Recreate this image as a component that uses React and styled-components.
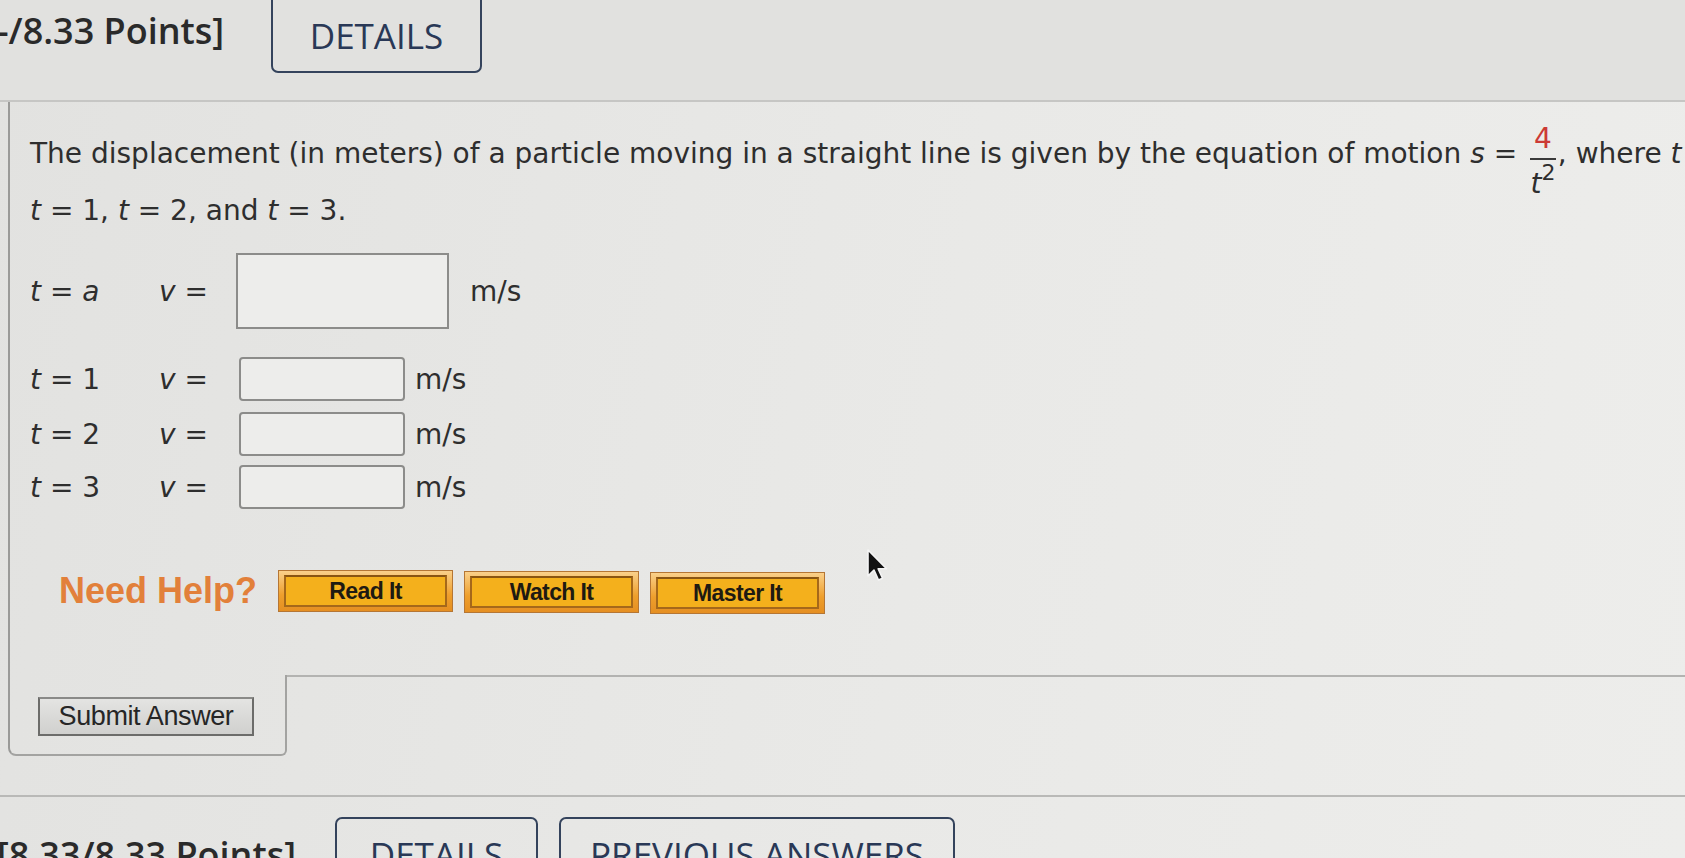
import React from 'react';
import styled, { createGlobalStyle } from 'styled-components';

const Global = createGlobalStyle`
  html, body {
    margin: 0;
    padding: 0;
  }
  body {
    width: 1685px;
    height: 858px;
    overflow: hidden;
    background: linear-gradient(100deg, #e2e2e0 0%, #e9e9e7 55%, #ededeb 100%);
    font-family: "DejaVu Sans", Verdana, sans-serif;
    color: #2e2e2e;
    position: relative;
  }
`;

const TopBar = styled.header`
  display: flex;
  align-items: flex-start;
  height: ${p => p.h}px;
  overflow: hidden;
  background: ${p => p.bg || 'transparent'};
  border-bottom: ${p => (p.line ? '2px solid #c6c6c4' : 'none')};
  padding-top: ${p => p.pt || 0}px;
`;

const Points = styled.div`
  box-sizing: border-box;
  width: ${p => p.w}px;
  font-family: "Open Sans", sans-serif;
  font-weight: 600;
  font-size: 36px;
  color: #2a2a2a;
  margin-left: -3px;
  padding-top: ${p => p.pt}px;
  white-space: nowrap;
`;

const Tab = styled.div`
  box-sizing: border-box;
  width: ${p => p.w}px;
  height: ${p => (p.up ? 82 : 92)}px;
  margin-top: ${p => (p.up ? -9 : 0)}px;
  margin-left: ${p => p.ml || 0}px;
  border: 2.5px solid #34435c;
  border-radius: ${p => (p.up ? '0 0 7px 7px' : '7px 7px 0 0')};
  display: flex;
  align-items: ${p => (p.up ? 'center' : 'flex-start')};
  justify-content: center;
  padding-top: ${p => (p.up ? 6 : 12)}px;
  font-family: "Open Sans", sans-serif;
  font-weight: 500;
  font-size: 35px;
  color: #293856;
  white-space: nowrap;
`;

const Panel = styled.section`
  margin-left: 8px;
`;

const Body = styled.div`
  border-left: 2px solid #9a9a98;
  padding: 17px 0 61px 20px;
`;

const Prompt = styled.div`
  font-size: 28px;
  white-space: nowrap;
  height: ${p => p.lh}px;
  line-height: ${p => p.lh}px;
`;

const Var = styled.i`
  font-style: italic;
`;

const Frac = styled.span`
  display: inline-flex;
  flex-direction: column;
  align-items: center;
  vertical-align: middle;
  position: relative;
  top: 6px;
  line-height: 30px;
  margin: -40px 2px -40px 4px;
`;

const Num = styled.span`
  color: #cc3a34;
  padding: 0 4px;
`;

const Bar = styled.span`
  align-self: stretch;
  height: 2px;
  background: #3a3a3a;
  margin: 4px 0 9px;
`;

const Sup = styled.sup`
  font-size: 22px;
  vertical-align: 13px;
  line-height: 0;
  font-style: normal;
`;

const Row = styled.div`
  display: grid;
  grid-template-columns: 129px 77px auto auto;
  justify-content: start;
  align-items: center;
  height: ${p => p.h}px;
  margin-top: ${p => p.mt}px;
  font-size: 28px;
`;

const Answer = styled.div`
  box-sizing: border-box;
  width: ${p => p.w}px;
  height: ${p => p.h}px;
  margin-left: ${p => p.ml}px;
  border: 2px solid #8c8c8a;
  border-radius: ${p => p.r}px;
  background: #ededeb;
`;

const Unit = styled.span`
  margin-left: ${p => p.ml}px;
`;

const HelpRow = styled.div`
  display: flex;
  align-items: center;
  gap: 11px;
  margin-top: 58px;
  height: 46px;
`;

const NeedHelp = styled.span`
  font-family: "Liberation Sans", Arial, sans-serif;
  font-weight: bold;
  font-size: 36px;
  color: #e2803a;
  margin-left: 29px;
  margin-right: 10px;
`;

const HelpButton = styled.button`
  box-sizing: border-box;
  width: 175px;
  height: 42px;
  padding: 4px 5px;
  margin-top: ${p => p.dy}px;
  border: 1px solid #b57634;
  background: linear-gradient(#fad08a, #ee9f2c 60%, #e58f22);
  cursor: pointer;
`;

const ButtonFace = styled.span`
  display: flex;
  align-items: center;
  justify-content: center;
  height: 100%;
  box-sizing: border-box;
  background: #f4b01c;
  border: 2px solid #a5681a;
  border-top-color: #8a5512;
  font-family: "Liberation Sans", Arial, sans-serif;
  font-weight: bold;
  font-size: 23px;
  letter-spacing: -0.6px;
  color: #1e1a12;
`;

const Footer = styled.div`
  display: flex;
  align-items: flex-start;
`;

const SubmitCell = styled.div`
  box-sizing: border-box;
  width: 279px;
  height: 81px;
  border: 2px solid #a3a3a1;
  border-top: none;
  border-left-color: #9a9a98;
  border-radius: 0 0 6px 8px;
  padding: 22px 0 0 28px;
`;

const Rest = styled.div`
  flex: 1;
  border-top: 2px solid #b3b3b1;
`;

const SubmitButton = styled.button`
  width: 216px;
  height: 39px;
  border: 2px solid #6c6c6a;
  border-top-color: #8a8a88;
  background: linear-gradient(#e4e4e2, #d0d0ce);
  font-family: "Liberation Sans", Arial, sans-serif;
  font-size: 27px;
  letter-spacing: -0.4px;
  color: #262626;
  padding: 0;
  cursor: pointer;
`;

const Divider = styled.hr`
  margin: 39px 0 0;
  border: none;
  border-top: 2px solid #b9b9b7;
`;

const Cursor = styled.svg`
  position: absolute;
  left: 866px;
  top: 548px;
`;

const rows = [
  { t: '1', mt: 27 },
  { t: '2', mt: 9 },
  { t: '3', mt: 7 },
];

const helps = [
  { label: 'Read It', dy: 0 },
  { label: 'Watch It', dy: 2 },
  { label: 'Master It', dy: 4 },
];

export default function App() {
  return (
    <>
      <Global />
      <TopBar h={100} line bg="#e1e1df">
        <Points w={274} pt={6}>-/8.33 Points]</Points>
        <Tab w={211} up>DETAILS</Tab>
      </TopBar>

      <Panel>
        <Body>
          <Prompt lh={70}>
            The displacement (in meters) of a particle moving in a straight line is given by the equation of motion{' '}
            <Var>s</Var> ={' '}
            <Frac>
              <Num>4</Num>
              <Bar />
              <span>
                <Var>t</Var>
                <Sup>2</Sup>
              </span>
            </Frac>
            , where <Var>t</Var>
          </Prompt>
          <Prompt lh={44}>
            <Var>t</Var> = 1, <Var>t</Var> = 2, and <Var>t</Var> = 3.
          </Prompt>

          <Row h={76} mt={20}>
            <span>
              <Var>t</Var> = <Var>a</Var>
            </span>
            <span>
              <Var>v</Var> =
            </span>
            <Answer w={213} h={76} ml={0} r={0} />
            <Unit ml={21}>m/s</Unit>
          </Row>

          {rows.map(r => (
            <Row key={r.t} h={46} mt={r.mt}>
              <span>
                <Var>t</Var> = {r.t}
              </span>
              <span>
                <Var>v</Var> =
              </span>
              <Answer w={166} h={44} ml={3} r={4} />
              <Unit ml={10}>m/s</Unit>
            </Row>
          ))}

          <HelpRow>
            <NeedHelp>Need Help?</NeedHelp>
            {helps.map(h => (
              <HelpButton key={h.label} dy={h.dy}>
                <ButtonFace>{h.label}</ButtonFace>
              </HelpButton>
            ))}
          </HelpRow>
        </Body>

        <Footer>
          <SubmitCell>
            <SubmitButton>Submit Answer</SubmitButton>
          </SubmitCell>
          <Rest />
        </Footer>
      </Panel>

      <Divider />

      <TopBar h={41} pt={20}>
        <Points w={338} pt={13}>[8.33/8.33 Points]</Points>
        <Tab w={203}>DETAILS</Tab>
        <Tab w={396} ml={21}>PREVIOUS ANSWERS</Tab>
      </TopBar>

      <Cursor width="24" height="36" viewBox="0 0 24 36">
        <path
          d="M2 2 L2 28 L8 22 L12.5 32 L16.5 30.2 L12.2 20.8 L20.5 20.8 Z"
          fill="#111"
          stroke="#f4f4f4"
          strokeWidth="1.6"
          strokeLinejoin="round"
        />
      </Cursor>
    </>
  );
}
